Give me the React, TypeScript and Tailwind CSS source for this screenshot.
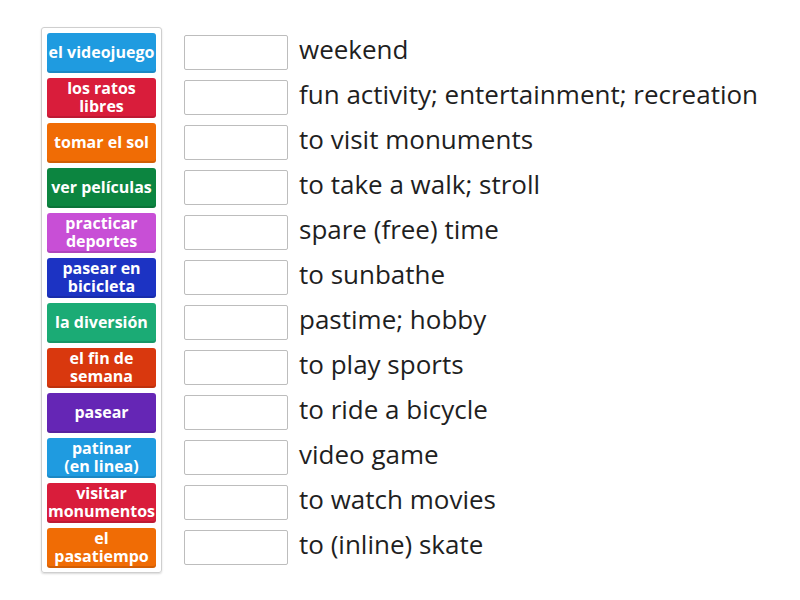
import React from "react";

const tiles = [
  { label: "el videojuego", color: "bg-[#1f9be0]" },
  { label: "los ratos libres", color: "bg-[#d91d3b]" },
  { label: "tomar el sol", color: "bg-[#f06c05]" },
  { label: "ver películas", color: "bg-[#0c8540]" },
  { label: "practicar deportes", color: "bg-[#c84fd6]" },
  { label: "pasear en bicicleta", color: "bg-[#1c33c3]" },
  { label: "la diversión", color: "bg-[#1bab75]" },
  { label: "el fin de semana", color: "bg-[#d9380e]" },
  { label: "pasear", color: "bg-[#6526b5]" },
  { label: "patinar\n(en linea)", color: "bg-[#1f9be0]" },
  { label: "visitar monumentos", color: "bg-[#d91d3b]" },
  { label: "el pasatiempo", color: "bg-[#f06c05]" },
];

const meanings = [
  "weekend",
  "fun activity; entertainment; recreation",
  "to visit monuments",
  "to take a walk; stroll",
  "spare (free) time",
  "to sunbathe",
  "pastime; hobby",
  "to play sports",
  "to ride a bicycle",
  "video game",
  "to watch movies",
  "to (inline) skate",
];

export default function App() {
  return (
    <div className="w-[800px] h-[600px] bg-white font-['Open_Sans',sans-serif] flex items-start pl-[41px] pt-[27px]">
      {/* tile bank */}
      <div className="w-[121px] border border-[#cfcfcf] rounded-[3px] shadow-[0_1px_2px_rgba(0,0,0,0.15)] px-[5px] pt-[5px] pb-[4px] flex flex-col gap-[5px]">
        {tiles.map((t) => (
          <div
            key={t.label}
            className={`${t.color} h-[40px] pb-[3px] rounded-[3px] flex items-center justify-center text-center text-white font-bold text-[16px] leading-[18px] whitespace-pre-line shadow-[inset_0_-2px_0_rgba(0,0,0,0.12)]`}
          >
            {t.label}
          </div>
        ))}
      </div>

      {/* answer rows */}
      <div className="ml-[22px] flex flex-col pt-[8px]">
        {meanings.map((m) => (
          <div key={m} className="h-[45px] flex items-start">
            <div className="w-[104px] h-[35px] border border-[#bdbdbd] rounded-[2px] bg-white" />
            <span className="ml-[11px] -mt-[3px] text-[26px] leading-[35px] text-[#1f1f1f] whitespace-nowrap">
              {m}
            </span>
          </div>
        ))}
      </div>
    </div>
  );
}
